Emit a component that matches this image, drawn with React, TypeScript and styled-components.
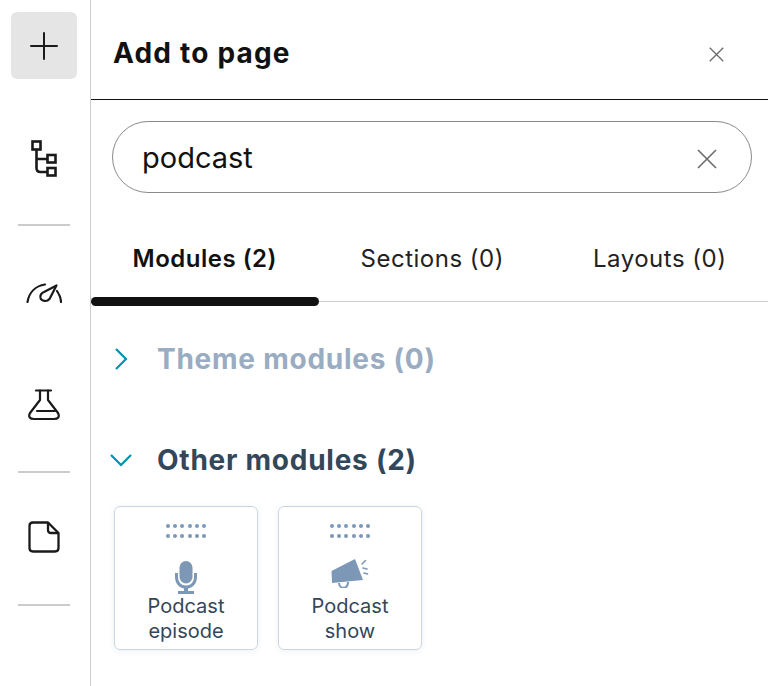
import React from "react";
import styled, { createGlobalStyle } from "styled-components";

const GlobalStyle = createGlobalStyle`
  html, body {
    margin: 0;
    padding: 0;
    height: 100%;
    background: #fff;
    overflow: hidden;
  }
  #root {
    height: 100%;
  }
`;

const Page = styled.div`
  display: flex;
  width: 768px;
  height: 686px;
  font-family: "Inter", "Liberation Sans", sans-serif;
  overflow: hidden;
`;

const Rail = styled.nav`
  box-sizing: border-box;
  flex: 0 0 91px;
  border-right: 1px solid #cccccc;
  padding: 12px 2px 0 0;
  display: flex;
  flex-direction: column;
  align-items: center;
`;

const RailButton = styled.div<{ $active?: boolean; $height: number; $top?: number }>`
  width: 66px;
  height: ${(p) => p.$height}px;
  margin-top: ${(p) => p.$top ?? 0}px;
  border-radius: 6px;
  background: ${(p) => (p.$active ? "#e5e5e5" : "transparent")};
  display: flex;
  align-items: center;
  justify-content: center;
  color: #1a1a1a;
`;

const RailDivider = styled.div<{ $top: number }>`
  width: 52px;
  height: 2px;
  background: #cccccc;
  margin-top: ${(p) => p.$top}px;
`;

const Panel = styled.main`
  flex: 1;
  min-width: 0;
  display: flex;
  flex-direction: column;
`;

const Header = styled.header`
  box-sizing: border-box;
  height: 100px;
  border-bottom: 1px solid #111;
  padding: 10px 44px 0 22px;
  display: flex;
  align-items: center;
  justify-content: space-between;
`;

const Title = styled.h1`
  margin: -3px 0 0;
  font-size: 28px;
  font-weight: 700;
  color: #111;
  letter-spacing: 1.2px;
`;

const IconButton = styled.span<{ $drop?: number }>`
  display: flex;
  color: #6b6b6b;
  margin-top: ${(p) => p.$drop ?? 0}px;
`;

const Search = styled.div`
  box-sizing: border-box;
  margin: 21px 16px 0 21px;
  height: 72px;
  border: 1px solid #8a8a8a;
  border-radius: 36px;
  padding: 0 34px 0 29px;
  display: flex;
  align-items: center;
  justify-content: space-between;
`;

const SearchText = styled.span`
  font-size: 29px;
  color: #111;
  line-height: 1;
`;

const Tabs = styled.div`
  display: flex;
  margin-top: 30px;
  height: 79px;
  box-sizing: border-box;
  border-bottom: 1px solid #cccccc;
  width: 677px;
  position: relative;
`;

const Tab = styled.div<{ $active?: boolean }>`
  flex: 0 0 227.5px;
  text-align: center;
  padding-top: 21px;
  font-size: 24px;
  line-height: 30px;
  letter-spacing: 0.5px;
  font-weight: ${(p) => (p.$active ? 600 : 400)};
  color: ${(p) => (p.$active ? "#111" : "#222")};
  white-space: nowrap;
  position: relative;

  ${(p) =>
    p.$active &&
    `&::after {
      content: "";
      position: absolute;
      left: 0;
      right: 0;
      bottom: -5px;
      height: 9px;
      border-radius: 5px;
      background: #111;
    }`}
`;

const Group = styled.div<{ $top: number }>`
  display: flex;
  align-items: center;
  gap: 24px;
  margin-top: ${(p) => p.$top}px;
  padding-left: 18px;
  height: 40px;
`;

const Chevron = styled.span`
  flex: 0 0 24px;
  display: flex;
  justify-content: center;
  color: #0091ae;
`;

const GroupTitle = styled.h2<{ $muted?: boolean }>`
  margin: 0;
  font-size: 28px;
  font-weight: 700;
  letter-spacing: 0.75px;
  color: ${(p) => (p.$muted ? "#99acc2" : "#33475b")};
  white-space: nowrap;
`;

const Cards = styled.div`
  display: flex;
  gap: 20px;
  padding-left: 23px;
  margin-top: 26px;
`;

const Card = styled.div`
  box-sizing: border-box;
  width: 144px;
  height: 144px;
  border: 1px solid #cbd6e2;
  border-radius: 6px;
  box-shadow: 0 1px 6px rgba(45, 62, 80, 0.08);
  padding-top: 17px;
  display: flex;
  flex-direction: column;
  align-items: center;
`;

const Grip = styled.div`
  display: grid;
  grid-template-columns: repeat(6, 4px);
  gap: 6px 3.4px;
  margin-bottom: 22px;
`;

const Dot = styled.span`
  width: 4px;
  height: 4px;
  border-radius: 50%;
  background: #7c98b6;
`;

const CardIcon = styled.div`
  height: 34px;
  display: flex;
  align-items: center;
  justify-content: center;
`;

const Megaphone = styled.svg`
  margin-top: -8px;
`;

const CardLabel = styled.div`
  font-size: 20px;
  line-height: 25px;
  color: #33475b;
  text-align: center;
`;

const CloseIcon = ({ size, weight }: { size: number; weight: number }) => (
  <svg width={size} height={size} viewBox="0 0 20 20" fill="none" stroke="currentColor" strokeWidth={weight}>
    <path d="M1 1 L19 19 M19 1 L1 19" />
  </svg>
);

const GripDots = () => (
  <Grip>
    {Array.from({ length: 12 }).map((_, i) => (
      <Dot key={i} />
    ))}
  </Grip>
);

const tabs = ["Modules (2)", "Sections (0)", "Layouts (0)"];

export default function App() {
  return (
    <Page>
      <GlobalStyle />
      <Rail>
        <RailButton $active $height={67}>
          <svg width="28" height="28" viewBox="0 0 28 28" stroke="currentColor" strokeWidth="2" strokeLinecap="round">
            <path d="M14 1 V27 M1 14 H27" />
          </svg>
        </RailButton>
        <RailButton $height={40} $top={60}>
          <svg width="28" height="38" viewBox="0 0 28 38" fill="none" stroke="currentColor" strokeWidth="2.6">
            <rect x="2.5" y="1.5" width="8" height="8" />
            <rect x="17.5" y="15" width="8" height="7.5" />
            <rect x="17.5" y="28" width="8" height="7.5" />
            <path d="M6.5 9.5 V28 Q6.5 32 10.5 32 H17.5 M6.5 19 H17.5" />
          </svg>
        </RailButton>
        <RailDivider $top={45} />
        <RailButton $height={30} $top={52}>
          <svg width="36" height="20" viewBox="0 0 36 20" fill="none" stroke="currentColor" strokeWidth="2.2" strokeLinecap="round" strokeLinejoin="round">
            <path d="M1.5 19 C3 10 9 3 19 1.5" />
            <path d="M31 8 C33 11 35 15 35 19" />
            <path d="M30.5 2.5 L23.5 16 C21 19 15.5 18.5 14.5 15 C14 12 15.5 10 18 9 Z" />
          </svg>
        </RailButton>
        <RailButton $height={34} $top={80}>
          <svg width="32" height="32" viewBox="0 0 32 32" fill="none" stroke="currentColor" strokeWidth="2.2" strokeLinecap="round" strokeLinejoin="round">
            <path d="M8 1.5 H23" />
            <path d="M12 1.5 V11 L2 24 C0 28 2 30 6 30 H26 C30 30 32 28 30 24 L20 11 V1.5" />
            <path d="M9 22 H27" />
          </svg>
        </RailButton>
        <RailDivider $top={49} />
        <RailButton $height={34} $top={47}>
          <svg width="32" height="32" viewBox="0 0 32 32" fill="none" stroke="currentColor" strokeWidth="2.3" strokeLinejoin="round">
            <path d="M4 1.5 H20 L30.5 12 V27 Q30.5 30.5 27 30.5 H5 Q1.5 30.5 1.5 27 V5 Q1.5 1.5 5 1.5 Z" />
            <path d="M20 1.5 V9 Q20 12 23 12 H30.5" />
          </svg>
        </RailButton>
        <RailDivider $top={50} />
      </Rail>
      <Panel>
        <Header>
          <Title>Add to page</Title>
          <IconButton>
            <CloseIcon size={15} weight={1.8} />
          </IconButton>
        </Header>
        <Search>
          <SearchText>podcast</SearchText>
          <IconButton $drop={3}>
            <CloseIcon size={20} weight={1.6} />
          </IconButton>
        </Search>
        <Tabs>
          {tabs.map((t, i) => (
            <Tab key={t} $active={i === 0}>
              {t}
            </Tab>
          ))}
        </Tabs>
        <Group $top={37}>
          <Chevron>
            <svg width="14" height="22" viewBox="0 0 14 22" fill="none" stroke="currentColor" strokeWidth="2.2">
              <path d="M2 1 L12 11 L2 21" />
            </svg>
          </Chevron>
          <GroupTitle $muted>Theme modules (0)</GroupTitle>
        </Group>
        <Group $top={61}>
          <Chevron>
            <svg width="22" height="14" viewBox="0 0 22 14" fill="none" stroke="currentColor" strokeWidth="2.2">
              <path d="M1 2 L11 12 L21 2" />
            </svg>
          </Chevron>
          <GroupTitle>Other modules (2)</GroupTitle>
        </Group>
        <Cards>
          <Card>
            <GripDots />
            <CardIcon>
              <svg width="24" height="33" viewBox="0 0 24 33" fill="#7c98b6">
                <rect x="5.5" y="0" width="13" height="22.5" rx="6.5" />
                <path d="M1 12 H4 V16 C4 21 7.5 24.5 12 24.5 C16.5 24.5 20 21 20 16 V12 H23 V16 C23 22 19 27 14 27.5 V30 H20 V33 H4 V30 H10 V27.5 C5 27 1 22 1 16 Z" />
              </svg>
            </CardIcon>
            <CardLabel>
              Podcast
              <br />
              episode
            </CardLabel>
          </Card>
          <Card>
            <GripDots />
            <CardIcon>
              <Megaphone width="38" height="30" viewBox="0 0 38 30" fill="#7c98b6">
                <path d="M0.5 13 L24 1 L32 22 L1 25 Z" />
                <path d="M8 25 C8 31.5 17 31.5 17 24" fill="none" stroke="#7c98b6" strokeWidth="2" />
                <path d="M31 6 L34.5 2.5 M32 10 L36 11 M33 15 L36.5 16" fill="none" stroke="#7c98b6" strokeWidth="1.6" strokeLinecap="round" />
              </Megaphone>
            </CardIcon>
            <CardLabel>
              Podcast
              <br />
              show
            </CardLabel>
          </Card>
        </Cards>
      </Panel>
    </Page>
  );
}
